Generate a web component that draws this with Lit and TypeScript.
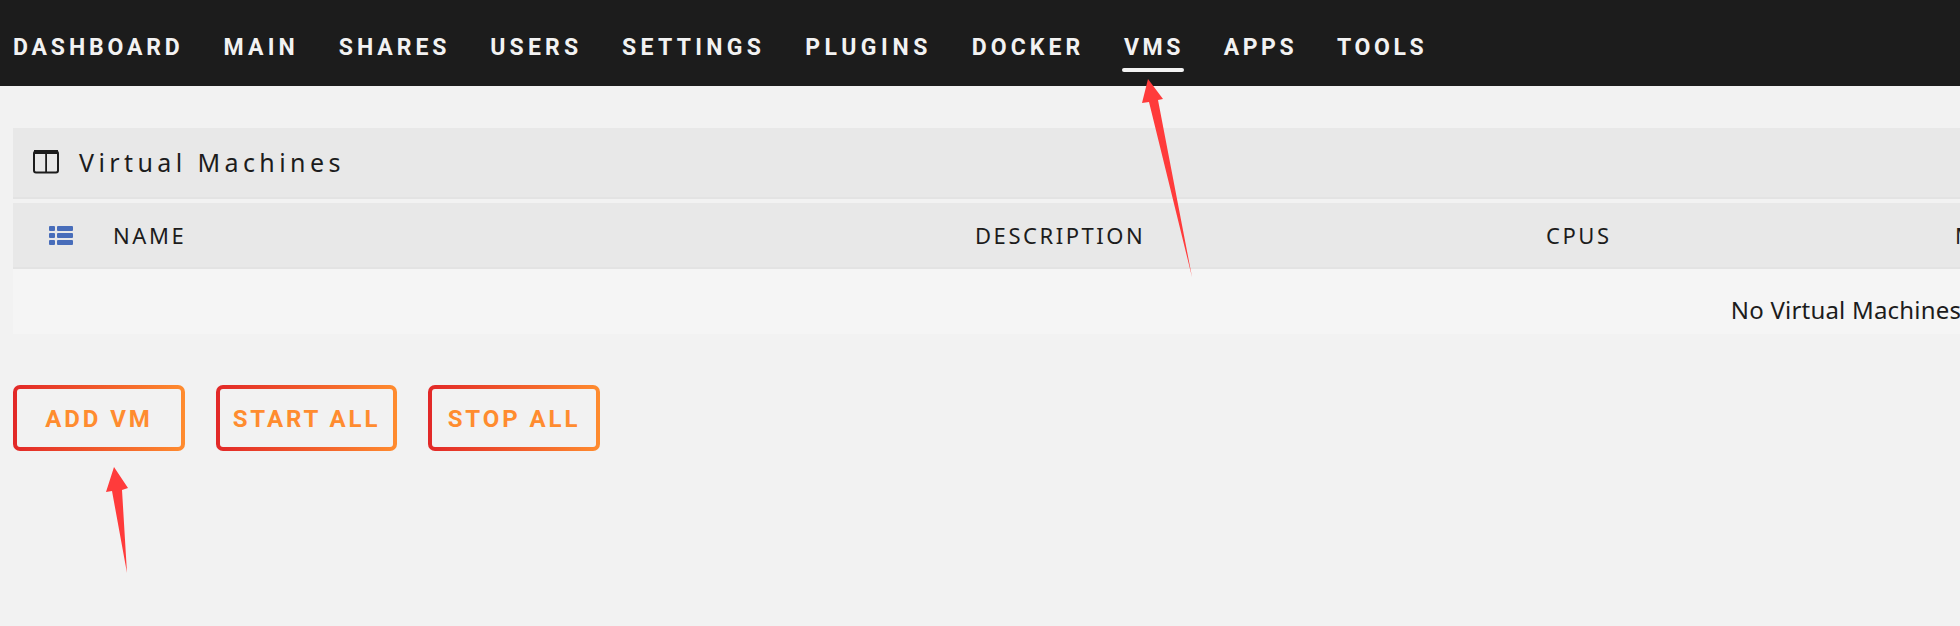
import { LitElement, html, css, svg } from "lit";
import { customElement } from "lit/decorators.js";

const BASE_SPACING = 3.85;
const NAV: [string, number][] = [
  ["DASHBOARD", 0], ["MAIN", 0.3], ["SHARES", 0.1], ["USERS", 0.3], ["SETTINGS", 0.45],
  ["PLUGINS", 0.7], ["DOCKER", 0.2], ["VMS", -0.4], ["APPS", -0.3], ["TOOLS", -0.25],
];
const BTNS = ["ADD VM", "START ALL", "STOP ALL"];

@customElement("app-root")
export class AppRoot extends LitElement {
  static styles = css`
    :host { display: block; position: relative; width: 1960px; height: 626px; overflow: hidden; background: #f2f2f2; color: #1c1c1c; font-family: "Noto Sans", "Open Sans", sans-serif; }
    .nav { height: 86px; background: #1c1c1c; display: flex; padding-left: 13px; gap: 39.9px; }
    .nav a { position: relative; height: 86px; box-sizing: border-box; padding-top: 8px; display: flex; align-items: center; color: #f2f2f2; font-family: Roboto, sans-serif; font-weight: 700; font-size: 23px; }
    .nav a.active::after { content: ""; position: absolute; left: -2px; right: 0; top: 68px; height: 4px; border-radius: 2px; background: #f2f2f2; }
    .content { width: 3679px; box-sizing: border-box; padding: 42px 0 0 13px; }
    .title { height: 71px; box-sizing: border-box; background: #e8e8e8; border-bottom: 2px solid #e3e3e3; display: flex; align-items: center; padding-left: 20px; gap: 20px; font-size: 25px; letter-spacing: 4.4px; margin-bottom: 4px; line-height: 30px; padding-bottom: 2px; }
    .head { height: 66px; box-sizing: border-box; background: #e8e8e8; border-bottom: 2px solid #e3e3e3; display: grid; grid-template-columns: 100px 862px 571px 409px 1fr; align-items: center; font-size: 22px; letter-spacing: 2.55px; }
    .head .ic { padding-left: 36px; display: flex; }
    .empty { height: 65px; box-sizing: border-box; padding-top: 16px; background: #f5f5f5; display: flex; align-items: center; justify-content: center; font-size: 24px; letter-spacing: 0.2px; }
    .btns { display: flex; gap: 31px; margin-top: 51px; }
    .btn { box-sizing: border-box; height: 66px; padding-top: 2px; border: 4px solid transparent; border-radius: 7px; background: linear-gradient(#f2f2f2, #f2f2f2) padding-box, linear-gradient(90deg, #e22828, #ff8c2f) border-box; display: flex; align-items: center; justify-content: center; color: #ff8c2f; font-family: Roboto, sans-serif; font-weight: 700; font-size: 24px; letter-spacing: 2.9px; }
    .b0 { width: 172px; } .b1 { width: 181px; } .b2 { width: 172px; }
    .over { position: absolute; left: 0; top: 0; pointer-events: none; }
  `;

  render() {
    return html`
      <div class="nav">${NAV.map(([n, d]) => html`<a class=${n === "VMS" ? "active" : ""} style="letter-spacing:${BASE_SPACING + d}px">${n}</a>`)}</div>
      <div class="content">
        <div class="title">
          <svg width="26" height="24" viewBox="0 0 26 24"><rect x="1" y="1.5" width="24" height="21" rx="2" fill="none" stroke="#1c1c1c" stroke-width="2"/><rect x="1" y="0" width="24" height="4" fill="#1c1c1c"/><rect x="12.2" y="2" width="1.8" height="20" fill="#1c1c1c"/></svg>
          <span>Virtual Machines</span>
        </div>
        <div class="head">
          <div class="ic"><svg width="24" height="19" viewBox="0 0 24 19" fill="#486dba"><rect width="6" height="5" y="0" rx="1"/><rect x="8" y="0" width="16" height="5" rx="1"/><rect width="6" height="5" y="7" rx="1"/><rect x="8" y="7" width="16" height="5" rx="1"/><rect width="6" height="5" y="14" rx="1"/><rect x="8" y="14" width="16" height="5" rx="1"/></svg></div>
          <div>NAME</div><div>DESCRIPTION</div><div>CPUS</div><div>MEMORY</div>
        </div>
        <div class="empty">No Virtual Machines</div>
        <div class="btns">${BTNS.map((b, i) => html`<div class="btn b${i}">${b}</div>`)}</div>
      </div>
      <svg class="over" width="1960" height="626">
        ${svg`<polygon fill="#ff3b3b" points="1148,79 1163,99 1158,100 1192,277 1149,102 1142,103"/>`}
        ${svg`<polygon fill="#ff3b3b" points="114,467 128,488 122,490 127,573 112,491 106,492"/>`}
      </svg>
    `;
  }
}
